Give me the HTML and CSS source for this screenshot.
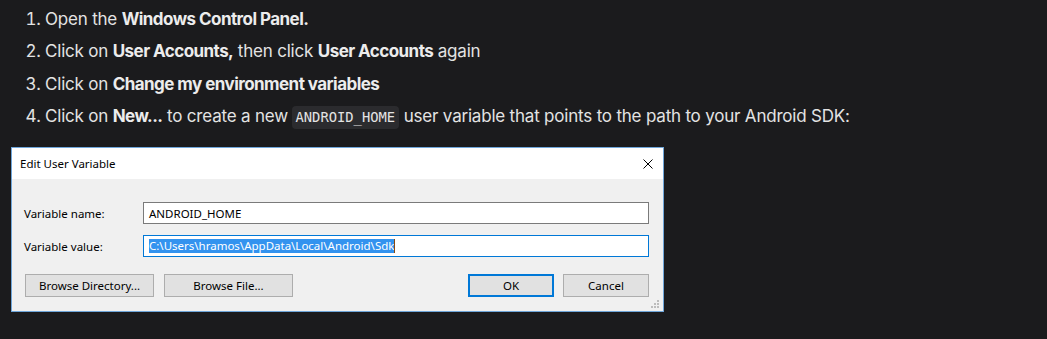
FILE: index.html
```html
<!DOCTYPE html>
<html>
<head>
<meta charset="utf-8">
<link rel="stylesheet" href="styles.css">
</head>
<body>
<ol class="steps">
  <li>Open the <strong>Windows Control Panel.</strong></li>
  <li>Click on <strong>User Accounts,</strong> then click <strong>User Accounts</strong> again</li>
  <li>Click on <strong>Change my environment variables</strong></li>
  <li>Click on <strong>New...</strong> to create a new <code>ANDROID_HOME</code> user variable that points to the path to your Android SDK:</li>
</ol>
<div class="dialog">
  <div class="titlebar">
    <span class="title">Edit User Variable</span>
    <svg class="close" width="10" height="10" viewBox="0 0 10 10"><path d="M0.5 0.5 L9.5 9.5 M9.5 0.5 L0.5 9.5" stroke="#000" stroke-width="1"/></svg>
  </div>
  <div class="body">
    <div class="row">
      <span class="label">Variable name:</span>
      <div class="field">ANDROID_HOME</div>
    </div>
    <div class="row row2">
      <span class="label">Variable value:</span>
      <div class="field focused"><span class="sel">C:\Users\hramos\AppData\Local\Android\Sdk</span><span class="caret"></span></div>
    </div>
    <div class="buttons">
      <div class="left">
        <span class="btn wide">Browse Directory...</span>
        <span class="btn wide">Browse File...</span>
      </div>
      <div class="right">
        <span class="btn narrow default">OK</span>
        <span class="btn narrow">Cancel</span>
      </div>
    </div>
    <svg class="grip" width="9" height="9" viewBox="0 0 9 9">
      <rect x="6" y="0" width="2" height="2" fill="#bcbcbc"/>
      <rect x="3" y="3" width="2" height="2" fill="#bcbcbc"/>
      <rect x="6" y="3" width="2" height="2" fill="#bcbcbc"/>
      <rect x="0" y="6" width="2" height="2" fill="#bcbcbc"/>
      <rect x="3" y="6" width="2" height="2" fill="#bcbcbc"/>
      <rect x="6" y="6" width="2" height="2" fill="#bcbcbc"/>
    </svg>
  </div>
</div>
</body>
</html>
```
FILE: styles.css
```css
html, body {
  margin: 0;
  padding: 0;
  background: #1b1b1d;
}
body {
  width: 1047px;
  height: 339px;
  overflow: hidden;
}
.steps {
  margin: 0;
  padding: 3px 0 0 45px;
  font-family: Inter, "Open Sans", sans-serif;
  font-size: 17px;
  line-height: 32.3px;
  color: #e3e3e3;
  letter-spacing: -0.2px;
}
.steps strong {
  font-weight: 700;
  color: #ececec;
  letter-spacing: -0.55px;
}
.steps code {
  font-family: "DejaVu Sans Mono", monospace;
  font-size: 13.8px;
  letter-spacing: 0;
  background: #2b2b2e;
  border-radius: 4px;
  padding: 3px 4px 4px 3px;
  color: #e3e3e3;
}
.dialog {
  margin: 14px 0 0 11px;
  width: 651px;
  height: 163px;
  border: 1px solid #6fa6da;
  background: #f0f0f0;
  font-family: "Noto Sans", "DejaVu Sans", sans-serif;
  font-size: 11.5px;
  color: #000;
  display: flex;
  flex-direction: column;
}
.titlebar {
  height: 31px;
  background: #fff;
  display: flex;
  align-items: center;
  justify-content: space-between;
  padding: 0 10px 0 8px;
}
.title {
  padding-bottom: 1px;
}
.close {
  display: block;
}
.body {
  position: relative;
  flex: 1;
  padding: 23px 14px 0 12px;
}
.row {
  display: flex;
  align-items: center;
}
.row2 {
  margin-top: 11px;
}
.label {
  width: 119px;
}
.field {
  flex: 1;
  height: 20px;
  border: 1px solid #7a7a7a;
  background: #fff;
  display: flex;
  align-items: center;
  padding-left: 5px;
  box-sizing: content-box;
}
.field.focused {
  border-color: #0078d7;
}
.sel {
  background: #3393ef;
  color: #fff;
  line-height: 14px;
  height: 14px;
}
.caret {
  display: inline-block;
  width: 1px;
  height: 14px;
  background: #8a4a10;
}
.buttons {
  margin-top: 17px;
  display: flex;
  justify-content: space-between;
}
.left, .right {
  display: flex;
}
.left {
  gap: 10px;
  padding-left: 1px;
}
.right {
  gap: 9px;
}
.btn {
  height: 21px;
  border: 1px solid #adadad;
  background: #e1e1e1;
  display: flex;
  align-items: center;
  justify-content: center;
}
.wide {
  width: 127px;
}
.narrow {
  width: 84px;
}
.btn.default {
  border: 2px solid #0078d7;
  height: 19px;
  width: 82px;
}
.grip {
  position: absolute;
  right: 3px;
  bottom: 2px;
}
```
